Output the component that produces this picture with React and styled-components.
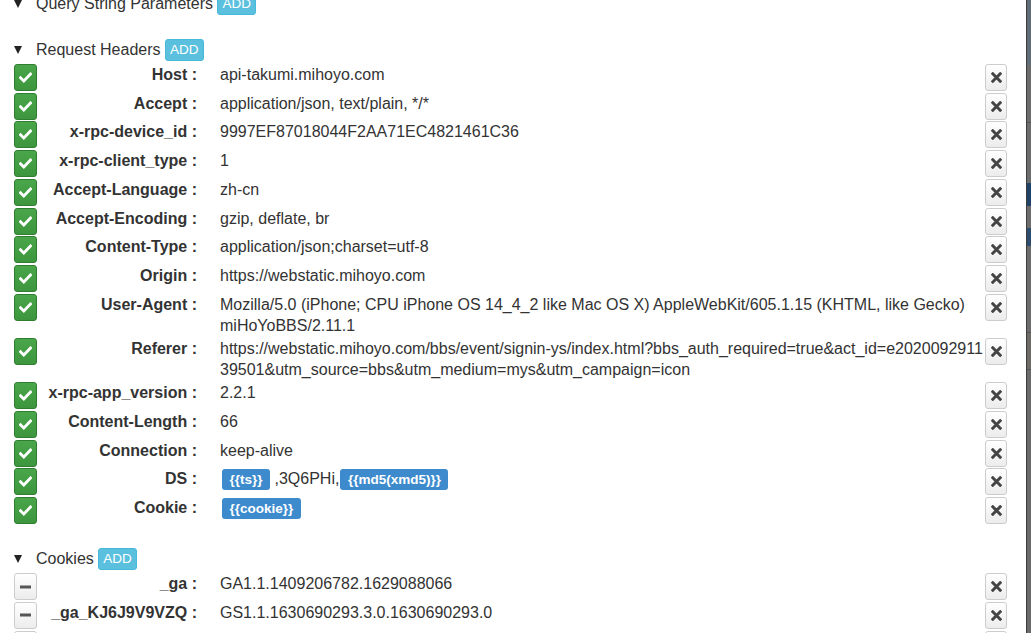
import React from "react";
import styled, { createGlobalStyle } from "styled-components";

const Global = createGlobalStyle`
  html, body { margin: 0; padding: 0; background: #fff; overflow: hidden; }
  body { font-family: "Liberation Sans", Arial, Helvetica, sans-serif; color: #333; }
`;

const Page = styled.div`
  display: flex;
  width: 1031px;
  height: 633px;
  overflow: hidden;
`;

const Main = styled.div`
  width: 1026px;
  flex: none;
  padding: 0 19px 0 14px;
  box-sizing: border-box;
  margin-top: -7px;
`;

const Backdrop = styled.div`
  flex: 1;
  display: flex;
  flex-direction: column;
  border-left: 1px solid #3c3c3c;
  background: #6c6c6c;
`;

const Shade = styled.div`
  height: ${(p) => p.$h}px;
  background: ${(p) => p.$bg};
  border-bottom: ${(p) => (p.$line ? "1px solid #555" : "none")};
  flex: none;
`;

const Section = styled.section`
  margin-bottom: 24px;
`;

const SectionHeader = styled.div`
  display: flex;
  align-items: center;
  height: 22px;
  margin-bottom: 3px;
  font-size: 16px;
`;

const Caret = styled.span`
  width: 0;
  height: 0;
  border-left: 4.5px solid transparent;
  border-right: 4.5px solid transparent;
  border-top: 8px solid #222;
  margin-right: 14px;
`;

const AddButton = styled.button`
  margin-left: 4px;
  height: 22px;
  padding: 0 4.5px;
  border: 1px solid #46b8da;
  border-radius: 3px;
  background: #5bc0de;
  color: #fff;
  font-family: inherit;
  font-size: 13.5px;
  line-height: 20px;
`;

const Row = styled.div`
  display: flex;
  align-items: flex-start;
  min-height: 27px;
  margin-bottom: 1.74px;
  font-size: 16px;
  line-height: 21.2px;
`;

const IconButton = styled.span`
  flex: none;
  width: ${(p) => p.$w}px;
  height: 27px;
  box-sizing: border-box;
  border-radius: 3px;
  display: flex;
  align-items: center;
  justify-content: center;
  border: 1px solid ${(p) => (p.$kind === "on" ? "#2f7d2f" : "#ccc")};
  background: ${(p) =>
    p.$kind === "on"
      ? "linear-gradient(#4aa64a, #3d963d)"
      : "linear-gradient(#ffffff, #ececec)"};
`;

const Label = styled.div`
  flex: none;
  width: 160px;
  text-align: right;
  font-weight: bold;
  white-space: nowrap;
`;

const Value = styled.div`
  flex: none;
  width: 764px;
  margin-left: 23px;
  margin-right: 1px;
  word-break: ${(p) => (p.$breakAll ? "break-all" : "normal")};
  overflow-wrap: anywhere;
`;

const Token = styled.span`
  display: inline-block;
  height: 21px;
  line-height: 21px;
  vertical-align: top;
  margin-top: 1px;
  margin-left: ${(p) => p.$ml ?? 2}px;
  padding: 0 7.5px;
  border-radius: 3px;
  background: #3d8bcd;
  color: #fff;
  font-size: 13.5px;
  font-weight: bold;
`;

const Check = () => (
  <svg width="13" height="11" viewBox="0 0 13 11">
    <path d="M1.5 5.8 L4.8 9 L11.5 2" fill="none" stroke="#fff" strokeWidth="2.8" strokeLinecap="square" />
  </svg>
);

const Times = () => (
  <svg width="11" height="11" viewBox="0 0 11 11">
    <path d="M1.8 1.8 L9.2 9.2 M9.2 1.8 L1.8 9.2" fill="none" stroke="#444" strokeWidth="3" strokeLinecap="square" />
  </svg>
);

const Minus = () => (
  <svg width="11" height="4" viewBox="0 0 11 4">
    <rect x="0" y="0.5" width="11" height="3" fill="#555" />
  </svg>
);

const headers = [
  ["Host", "api-takumi.mihoyo.com"],
  ["Accept", "application/json, text/plain, */*"],
  ["x-rpc-device_id", "9997EF87018044F2AA71EC4821461C36"],
  ["x-rpc-client_type", "1"],
  ["Accept-Language", "zh-cn"],
  ["Accept-Encoding", "gzip, deflate, br"],
  ["Content-Type", "application/json;charset=utf-8"],
  ["Origin", "https://webstatic.mihoyo.com"],
  [
    "User-Agent",
    "Mozilla/5.0 (iPhone; CPU iPhone OS 14_4_2 like Mac OS X) AppleWebKit/605.1.15 (KHTML, like Gecko) miHoYoBBS/2.11.1",
  ],
  [
    "Referer",
    "https://webstatic.mihoyo.com/bbs/event/signin-ys/index.html?bbs_auth_required=true&act_id=e202009291139501&utm_source=bbs&utm_medium=mys&utm_campaign=icon",
    true,
  ],
  ["x-rpc-app_version", "2.2.1"],
  ["Content-Length", "66"],
  ["Connection", "keep-alive"],
  [
    "DS",
    <>
      <Token>{"{{ts}}"}</Token> ,3Q6PHi,<Token $ml={1}>{"{{md5(xmd5)}}"}</Token>
    </>,
  ],
  ["Cookie", <Token>{"{{cookie}}"}</Token>],
];

const cookies = [
  ["_ga", "GA1.1.1409206782.1629088066"],
  ["_ga_KJ6J9V9VZQ", "GS1.1.1630690293.3.0.1630690293.0"],
  ["_gid", "GA1.2.1003451907.1630690293"],
];

const Header = ({ title }) => (
  <SectionHeader>
    <Caret />
    {title}
    <AddButton>ADD</AddButton>
  </SectionHeader>
);

const ParamRow = ({ name, value, enabled, breakAll }) => (
  <Row>
    <IconButton $w={23} $kind={enabled ? "on" : "off"}>
      {enabled ? <Check /> : <Minus />}
    </IconButton>
    <Label>{name} :</Label>
    <Value $breakAll={breakAll}>{value}</Value>
    <IconButton $w={22} $kind="off">
      <Times />
    </IconButton>
  </Row>
);

const shades = [
  { h: 65, bg: "#5f6d79" },
  { h: 57, bg: "#6c6c6c", line: true },
  { h: 60, bg: "#6c6c6c" },
  { h: 23, bg: "#1f4266" },
  { h: 22, bg: "#6c6c6c" },
  { h: 18, bg: "#2e4d6e" },
  { h: 86, bg: "#6c6c6c", line: true },
  { h: 36, bg: "#6e6a66", line: true },
  { h: 300, bg: "#6a6a6a" },
];

export default function App() {
  return (
    <Page>
      <Global />
      <Main>
        <Section>
          <Header title="Query String Parameters" />
        </Section>
        <Section>
          <Header title="Request Headers" />
          {headers.map(([n, v, b]) => (
            <ParamRow key={n} name={n} value={v} enabled breakAll={b} />
          ))}
        </Section>
        <Section>
          <Header title="Cookies" />
          {cookies.map(([n, v]) => (
            <ParamRow key={n} name={n} value={v} enabled={false} />
          ))}
        </Section>
      </Main>
      <Backdrop>
        {shades.map((s, i) => (
          <Shade key={i} $h={s.h} $bg={s.bg} $line={s.line} />
        ))}
      </Backdrop>
    </Page>
  );
}
